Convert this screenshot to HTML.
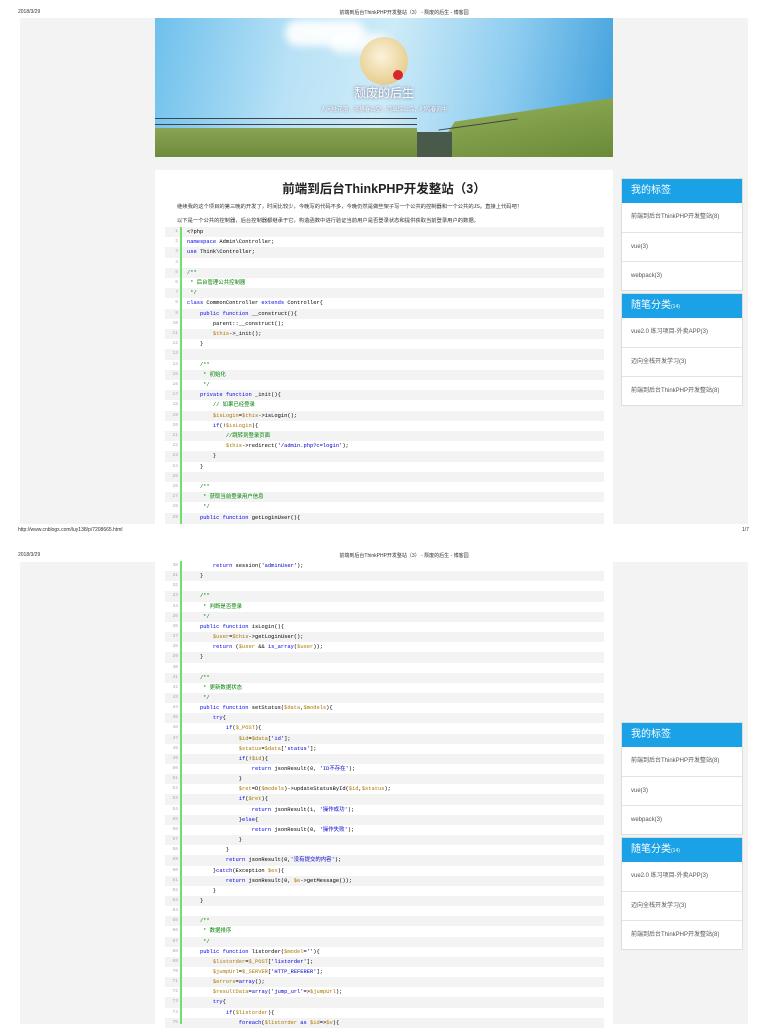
<!DOCTYPE html>
<html><head><meta charset="utf-8">
<style>
*{margin:0;padding:0;box-sizing:border-box}
body{width:768px;height:1024px;background:#fff;position:relative;overflow:hidden;font-family:"Liberation Sans","Noto Sans CJK SC",sans-serif;color:#333}
.abs{position:absolute}
.small{font-size:5px;color:#333;white-space:nowrap}
.hdr{left:155px;top:18px;width:458px;height:139px;overflow:hidden;background:linear-gradient(100deg,#6fc0ec 0%,#b9e2f6 30%,#cdebf8 50%,#8fcdf0 75%,#3f9fdc 100%)}
.code{font-family:"Liberation Mono","Noto Sans CJK SC",monospace;font-size:5.4px;white-space:pre;color:#000}
.row{position:absolute;left:165px;width:439px;height:10.2px;line-height:10.2px}
.row.o{background:#f3f3f3}
.ln{position:absolute;left:0;width:13px;text-align:right;color:#aaa;font-size:4.6px}
.tx{position:absolute;left:22px}
.bar{position:absolute;left:180px;width:2px;background:#6ce26c}
.b{color:#0000ee}
.v{color:#aa7700}
.s{color:#0000cc}
.c{color:#008200}
.side{position:absolute;left:621px;width:122px;background:#fff;border:1px solid #ddd}
.sh{background:#1ba1e6;color:#fff;font-size:10px;height:24px;line-height:24px;padding-left:9px}
.sh small{font-size:5px}
.si{height:29px;line-height:29px;font-size:6px;color:#555;padding-left:9px;border-top:1px solid #e3e3e3;white-space:nowrap}
</style></head><body>
<!-- page 1 -->
<div class="abs small" style="left:18px;top:9px">2018/3/29</div>
<div class="abs small" style="left:0;width:808px;text-align:center;top:9px">前端到后台ThinkPHP开发整站（3） - 颓废的后生 - 博客园</div>
<div class="abs" style="left:20px;top:18px;width:728px;height:506px;background:#f3f3f3"></div>
<div class="abs hdr">
  <div class="abs" style="left:130px;top:2px;width:80px;height:26px;border-radius:20px;background:rgba(255,255,255,.9);filter:blur(4px)"></div>
  <div class="abs" style="left:175px;top:15px;width:60px;height:20px;border-radius:20px;background:rgba(255,255,255,.75);filter:blur(4px)"></div>
  <div class="abs" style="left:0;top:110px;width:262px;height:29px;background:linear-gradient(180deg,#8aa455,#6e8a3c)"></div>
  <div class="abs" style="left:232px;top:80px;width:226px;height:59px;background:linear-gradient(170deg,#9ab55e,#6a8a38);clip-path:polygon(30% 40%,100% 0,100% 100%,20% 100%)"></div>
  <div class="abs" style="left:0;top:100px;width:262px;height:1px;background:#444"></div>
  <div class="abs" style="left:0;top:106px;width:262px;height:1px;background:#444"></div>
  <div class="abs" style="left:283px;top:106px;width:80px;height:1px;background:#444;transform:rotate(-8deg)"></div>
  <div class="abs" style="left:262px;top:114px;width:35px;height:25px;background:#4a5a4a"></div>
  <div class="abs" style="left:205px;top:19px;width:48px;height:48px;border-radius:50%;background:radial-gradient(circle at 45% 40%,#fbf3dc,#e8cf92 70%,#c9a660)"></div>
  <div class="abs" style="left:238px;top:52px;width:10px;height:10px;background:#d8262c;border-radius:50%"></div>
  <div class="abs" style="left:0;width:458px;text-align:center;top:66px;color:#fff;font-size:12px;text-shadow:0 0 3px #557">颓废的后生</div>
  <div class="abs" style="left:0;width:458px;text-align:center;top:87px;color:#fff;font-size:5.5px;text-shadow:0 0 2px #557">人闲桂花落，夜静春山空，月出惊山鸟，时鸣春涧中</div>
</div>
<div class="abs" style="left:155px;top:170px;width:458px;height:354px;background:#fff"></div>
<div class="abs" style="left:155px;top:178px;width:458px;text-align:center;font-size:12.5px;font-weight:bold;color:#222">前端到后台ThinkPHP开发整站（3）</div>
<div class="abs small" style="left:177px;top:202px;font-size:5.3px">继续我的这个项目的第三晚的开发了，时间比较少，今晚写的代码不多，今晚仍然是做些架子写一个公共的控制器和一个公共的JS。直接上代码吧！</div>
<div class="abs small" style="left:177px;top:216px;font-size:5.3px">以下是一个公共的控制器，后台控制器都继承于它，构造函数中进行验证当前用户是否登录状态和提供获取当前登录用户的数据。</div>
<div class="code">
<div class="row o" style="top:227px"><span class="ln">1</span><span class="tx">&lt;?php</span></div>
<div class="row" style="top:237.2px"><span class="ln">2</span><span class="tx"><span class="b">namespace</span> Admin\Controller;</span></div>
<div class="row o" style="top:247.4px"><span class="ln">3</span><span class="tx"><span class="b">use</span> Think\Controller;</span></div>
<div class="row" style="top:257.6px"><span class="ln">4</span><span class="tx"></span></div>
<div class="row o" style="top:267.8px"><span class="ln">5</span><span class="tx c">/**</span></div>
<div class="row" style="top:278px"><span class="ln">6</span><span class="tx c"> * 后台管理公共控制器</span></div>
<div class="row o" style="top:288.2px"><span class="ln">7</span><span class="tx c"> */</span></div>
<div class="row" style="top:298.4px"><span class="ln">8</span><span class="tx"><span class="b">class</span> CommonController <span class="b">extends</span> Controller{</span></div>
<div class="row o" style="top:308.6px"><span class="ln">9</span><span class="tx">    <span class="b">public function</span> __construct(){</span></div>
<div class="row" style="top:318.8px"><span class="ln">10</span><span class="tx">        parent::__construct();</span></div>
<div class="row o" style="top:329px"><span class="ln">11</span><span class="tx">        <span class="v">$this</span>-&gt;_init();</span></div>
<div class="row" style="top:339.2px"><span class="ln">12</span><span class="tx">    }</span></div>
<div class="row o" style="top:349.4px"><span class="ln">13</span><span class="tx"></span></div>
<div class="row" style="top:359.6px"><span class="ln">14</span><span class="tx c">    /**</span></div>
<div class="row o" style="top:369.8px"><span class="ln">15</span><span class="tx c">     * 初始化</span></div>
<div class="row" style="top:380px"><span class="ln">16</span><span class="tx c">     */</span></div>
<div class="row o" style="top:390.2px"><span class="ln">17</span><span class="tx">    <span class="b">private function</span> _init(){</span></div>
<div class="row" style="top:400.4px"><span class="ln">18</span><span class="tx c">        // 如果已经登录</span></div>
<div class="row o" style="top:410.6px"><span class="ln">19</span><span class="tx">        <span class="v">$isLogin</span>=<span class="v">$this</span>-&gt;isLogin();</span></div>
<div class="row" style="top:420.8px"><span class="ln">20</span><span class="tx">        <span class="b">if</span>(!<span class="v">$isLogin</span>){</span></div>
<div class="row o" style="top:431px"><span class="ln">21</span><span class="tx c">            //跳转到登录页面</span></div>
<div class="row" style="top:441.2px"><span class="ln">22</span><span class="tx">            <span class="v">$this</span>-&gt;redirect(<span class="s">'/admin.php?c=login'</span>);</span></div>
<div class="row o" style="top:451.4px"><span class="ln">23</span><span class="tx">        }</span></div>
<div class="row" style="top:461.6px"><span class="ln">24</span><span class="tx">    }</span></div>
<div class="row o" style="top:471.8px"><span class="ln">25</span><span class="tx"></span></div>
<div class="row" style="top:482px"><span class="ln">26</span><span class="tx c">    /**</span></div>
<div class="row o" style="top:492.2px"><span class="ln">27</span><span class="tx c">     * 获取当前登录用户信息</span></div>
<div class="row" style="top:502.4px"><span class="ln">28</span><span class="tx c">     */</span></div>
<div class="row o" style="top:512.6px;height:11.4px"><span class="ln">29</span><span class="tx">    <span class="b">public function</span> getLoginUser(){</span></div>
</div>
<div class="bar" style="top:227px;height:297px"></div>
<div class="side" style="top:178px">
  <div class="sh">我的标签</div>
  <div class="si" style="border-top:0">前端到后台ThinkPHP开发整站(8)</div>
  <div class="si">vue(3)</div>
  <div class="si">webpack(3)</div>
</div>
<div class="side" style="top:293px">
  <div class="sh">随笔分类<small>(14)</small></div>
  <div class="si" style="border-top:0">vue2.0 练习项目-外卖APP(3)</div>
  <div class="si">迈向全栈开发学习(3)</div>
  <div class="si">前端到后台ThinkPHP开发整站(8)</div>
</div>
<div class="abs small" style="left:18px;top:527px">http://www.cnblogs.com/luy138/p/7208665.html</div>
<div class="abs small" style="left:742px;top:527px">1/7</div>
<!-- page 2 -->
<div class="abs small" style="left:18px;top:552px">2018/3/29</div>
<div class="abs small" style="left:0;width:808px;text-align:center;top:552px">前端到后台ThinkPHP开发整站（3） - 颓废的后生 - 博客园</div>
<div class="abs" style="left:20px;top:562px;width:728px;height:462px;background:#f3f3f3"></div>
<div class="abs" style="left:155px;top:562px;width:458px;height:462px;background:#fff"></div>
<div class="code">
<div class="row" style="top:561px"><span class="ln">30</span><span class="tx">        <span class="b">return</span> session(<span class="s">'adminUser'</span>);</span></div>
<div class="row o" style="top:571.15px"><span class="ln">31</span><span class="tx">    }</span></div>
<div class="row" style="top:581.3px"><span class="ln">32</span><span class="tx"></span></div>
<div class="row o" style="top:591.45px"><span class="ln">33</span><span class="tx c">    /**</span></div>
<div class="row" style="top:601.6px"><span class="ln">34</span><span class="tx c">     * 判断是否登录</span></div>
<div class="row o" style="top:611.75px"><span class="ln">35</span><span class="tx c">     */</span></div>
<div class="row" style="top:621.9px"><span class="ln">36</span><span class="tx">    <span class="b">public function</span> isLogin(){</span></div>
<div class="row o" style="top:632.05px"><span class="ln">37</span><span class="tx">        <span class="v">$user</span>=<span class="v">$this</span>-&gt;getLoginUser();</span></div>
<div class="row" style="top:642.2px"><span class="ln">38</span><span class="tx">        <span class="b">return</span> (<span class="v">$user</span> &amp;&amp; <span class="b">is_array</span>(<span class="v">$user</span>));</span></div>
<div class="row o" style="top:652.35px"><span class="ln">39</span><span class="tx">    }</span></div>
<div class="row" style="top:662.5px"><span class="ln">40</span><span class="tx"></span></div>
<div class="row o" style="top:672.65px"><span class="ln">41</span><span class="tx c">    /**</span></div>
<div class="row" style="top:682.8px"><span class="ln">42</span><span class="tx c">     * 更新数据状态</span></div>
<div class="row o" style="top:692.95px"><span class="ln">43</span><span class="tx c">     */</span></div>
<div class="row" style="top:703.1px"><span class="ln">44</span><span class="tx">    <span class="b">public function</span> setStatus(<span class="v">$data</span>,<span class="v">$models</span>){</span></div>
<div class="row o" style="top:713.25px"><span class="ln">45</span><span class="tx">        <span class="b">try</span>{</span></div>
<div class="row" style="top:723.4px"><span class="ln">46</span><span class="tx">            <span class="b">if</span>(<span class="v">$_POST</span>){</span></div>
<div class="row o" style="top:733.55px"><span class="ln">47</span><span class="tx">                <span class="v">$id</span>=<span class="v">$data</span>[<span class="s">'id'</span>];</span></div>
<div class="row" style="top:743.7px"><span class="ln">48</span><span class="tx">                <span class="v">$status</span>=<span class="v">$data</span>[<span class="s">'status'</span>];</span></div>
<div class="row o" style="top:753.85px"><span class="ln">49</span><span class="tx">                <span class="b">if</span>(!<span class="v">$id</span>){</span></div>
<div class="row" style="top:764px"><span class="ln">50</span><span class="tx">                    <span class="b">return</span> jsonResult(0, <span class="s">'ID不存在'</span>);</span></div>
<div class="row o" style="top:774.15px"><span class="ln">51</span><span class="tx">                }</span></div>
<div class="row" style="top:784.3px"><span class="ln">52</span><span class="tx">                <span class="v">$ret</span>=D(<span class="v">$models</span>)-&gt;updateStatusById(<span class="v">$id</span>,<span class="v">$status</span>);</span></div>
<div class="row o" style="top:794.45px"><span class="ln">53</span><span class="tx">                <span class="b">if</span>(<span class="v">$ret</span>){</span></div>
<div class="row" style="top:804.6px"><span class="ln">54</span><span class="tx">                    <span class="b">return</span> jsonResult(1, <span class="s">'操作成功'</span>);</span></div>
<div class="row o" style="top:814.75px"><span class="ln">55</span><span class="tx">                }<span class="b">else</span>{</span></div>
<div class="row" style="top:824.9px"><span class="ln">56</span><span class="tx">                    <span class="b">return</span> jsonResult(0, <span class="s">'操作失败'</span>);</span></div>
<div class="row o" style="top:835.05px"><span class="ln">57</span><span class="tx">                }</span></div>
<div class="row" style="top:845.2px"><span class="ln">58</span><span class="tx">            }</span></div>
<div class="row o" style="top:855.35px"><span class="ln">59</span><span class="tx">            <span class="b">return</span> jsonResult(0,<span class="s">'没有提交的内容'</span>);</span></div>
<div class="row" style="top:865.5px"><span class="ln">60</span><span class="tx">        }<span class="b">catch</span>(Exception <span class="v">$ex</span>){</span></div>
<div class="row o" style="top:875.65px"><span class="ln">61</span><span class="tx">            <span class="b">return</span> jsonResult(0, <span class="v">$e</span>-&gt;getMessage());</span></div>
<div class="row" style="top:885.8px"><span class="ln">62</span><span class="tx">        }</span></div>
<div class="row o" style="top:895.95px"><span class="ln">63</span><span class="tx">    }</span></div>
<div class="row" style="top:906.1px"><span class="ln">64</span><span class="tx"></span></div>
<div class="row o" style="top:916.25px"><span class="ln">65</span><span class="tx c">    /**</span></div>
<div class="row" style="top:926.4px"><span class="ln">66</span><span class="tx c">     * 数据排序</span></div>
<div class="row o" style="top:936.55px"><span class="ln">67</span><span class="tx c">     */</span></div>
<div class="row" style="top:946.7px"><span class="ln">68</span><span class="tx">    <span class="b">public function</span> listorder(<span class="v">$model</span>=<span class="s">''</span>){</span></div>
<div class="row o" style="top:956.85px"><span class="ln">69</span><span class="tx">        <span class="v">$listorder</span>=<span class="v">$_POST</span>[<span class="s">'listorder'</span>];</span></div>
<div class="row" style="top:967px"><span class="ln">70</span><span class="tx">        <span class="v">$jumpUrl</span>=<span class="v">$_SERVER</span>[<span class="s">'HTTP_REFERER'</span>];</span></div>
<div class="row o" style="top:977.15px"><span class="ln">71</span><span class="tx">        <span class="v">$errors</span>=<span class="b">array</span>();</span></div>
<div class="row" style="top:987.3px"><span class="ln">72</span><span class="tx">        <span class="v">$resultData</span>=<span class="b">array</span>(<span class="s">'jump_url'</span>=&gt;<span class="v">$jumpUrl</span>);</span></div>
<div class="row o" style="top:997.45px"><span class="ln">73</span><span class="tx">        <span class="b">try</span>{</span></div>
<div class="row" style="top:1007.6px"><span class="ln">74</span><span class="tx">            <span class="b">if</span>(<span class="v">$listorder</span>){</span></div>
<div class="row o" style="top:1017.75px"><span class="ln">75</span><span class="tx">                <span class="b">foreach</span>(<span class="v">$listorder</span> <span class="b">as</span> <span class="v">$id</span>=&gt;<span class="v">$v</span>){</span></div>
</div>
<div class="bar" style="top:561px;height:463px"></div>
<div class="side" style="top:722px">
  <div class="sh">我的标签</div>
  <div class="si" style="border-top:0">前端到后台ThinkPHP开发整站(8)</div>
  <div class="si">vue(3)</div>
  <div class="si">webpack(3)</div>
</div>
<div class="side" style="top:837px">
  <div class="sh">随笔分类<small>(14)</small></div>
  <div class="si" style="border-top:0">vue2.0 练习项目-外卖APP(3)</div>
  <div class="si">迈向全栈开发学习(3)</div>
  <div class="si">前端到后台ThinkPHP开发整站(8)</div>
</div>
</body></html>
